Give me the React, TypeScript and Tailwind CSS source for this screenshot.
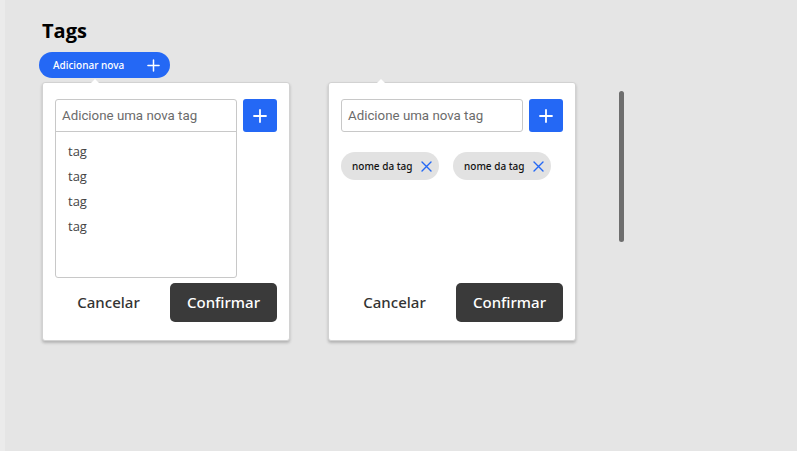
import React from "react";

const BLUE = "bg-[#2468f5]";

function Plus({ size = 14, stroke = 1.6 }: { size?: number; stroke?: number }) {
  return (
    <svg width={size} height={size} viewBox="0 0 14 14" fill="none">
      <path d="M7 1v12M1 7h12" stroke="white" strokeWidth={stroke} strokeLinecap="round" />
    </svg>
  );
}

function XIcon() {
  return (
    <svg width="11" height="11" viewBox="0 0 11 11" fill="none">
      <path d="M1 1l9 9M10 1l-9 9" stroke="#2468f5" strokeWidth="1.4" strokeLinecap="round" />
    </svg>
  );
}

function Notch() {
  return (
    <div className="absolute left-[48px] top-[-4px] w-0 h-0 border-l-[4px] border-r-[4px] border-b-[4px] border-l-transparent border-r-transparent border-b-white" />
  );
}

function Footer() {
  return (
    <div className="flex justify-between mt-auto">
      <button className="w-[107px] h-[39px] text-[15px] font-medium text-[#333] [font-family:'Noto_Sans',sans-serif]">
        Cancelar
      </button>
      <button className="w-[107px] h-[39px] rounded-[5px] bg-[#3a3a3a] text-white text-[15px] font-medium [font-family:'Noto_Sans',sans-serif]">
        Confirmar
      </button>
    </div>
  );
}

function Card({ children }: { children: React.ReactNode }) {
  return (
    <div className="relative w-[248px] h-[259px] bg-white border border-[#d2d2d2] rounded-[3px] shadow-[0_2px_3px_rgba(0,0,0,0.22)] pt-[16px] px-[12px] pb-[18px] flex flex-col">
      <Notch />
      {children}
    </div>
  );
}

function AddButton() {
  return (
    <button className={`w-[34px] h-[33px] rounded-[3px] ${BLUE} flex items-center justify-center shrink-0`}>
      <Plus size={14} stroke={1.8} />
    </button>
  );
}

export default function App() {
  return (
    <div className="flex w-[797px] h-[451px] bg-[#e5e5e5] overflow-hidden">
      <div className="w-[5px] h-full bg-[#ebebeb]" />
      <div className="flex flex-col pl-[34px]">
        <h1 className="ml-[3px] pt-[17px] leading-[28px] text-[20px] font-bold text-black [font-family:'Open_Sans',sans-serif]">
          Tags
        </h1>
        <button className={`mt-[7px] w-[131px] h-[26px] rounded-full ${BLUE} flex items-center justify-between pl-[14px] pr-[10px] text-white text-[10px] font-medium [font-family:'Noto_Sans',sans-serif]`}>
          <span>Adicionar nova</span>
          <Plus size={13} stroke={1.6} />
        </button>
        <div className="mt-[4px] ml-[3px] flex items-start">
          <Card>
            <div className="flex gap-[6px]">
              <div className="w-[182px] h-[179px] border border-[#c8c8c8] rounded-[3px] flex flex-col">
                <div className="h-[32px] border-b border-[#c8c8c8] flex items-center pl-[6px] text-[13.3px] text-[#6b6b6b] [font-family:Roboto,sans-serif]">
                  Adicione uma nova tag
                </div>
                <ul className="pt-[7px] pl-[12px] text-[13px] leading-[25px] text-[#444] [font-family:'Open_Sans',sans-serif]">
                  <li>tag</li>
                  <li>tag</li>
                  <li>tag</li>
                  <li>tag</li>
                </ul>
              </div>
              <AddButton />
            </div>
            <Footer />
          </Card>
          <div className="ml-[38px]">
            <Card>
              <div className="flex gap-[6px]">
                <div className="w-[182px] h-[33px] border border-[#c8c8c8] rounded-[3px] flex items-center pl-[6px] text-[13.3px] text-[#6b6b6b] [font-family:Roboto,sans-serif]">
                  Adicione uma nova tag
                </div>
                <AddButton />
              </div>
              <div className="flex gap-[14px] mt-[20px]">
                {[0, 1].map((i) => (
                  <div
                    key={i}
                    className="w-[98px] h-[28px] rounded-full bg-[#e2e2e2] flex items-center justify-between pl-[11px] pr-[7px] text-[10px] font-medium text-[#111] [font-family:'Noto_Sans',sans-serif]"
                  >
                    <span>nome da tag</span>
                    <XIcon />
                  </div>
                ))}
              </div>
              <Footer />
            </Card>
          </div>
          <div className="ml-[43px] mt-[9px] w-[5px] h-[151px] rounded-full bg-[#6e6e6e]" />
        </div>
      </div>
    </div>
  );
}
